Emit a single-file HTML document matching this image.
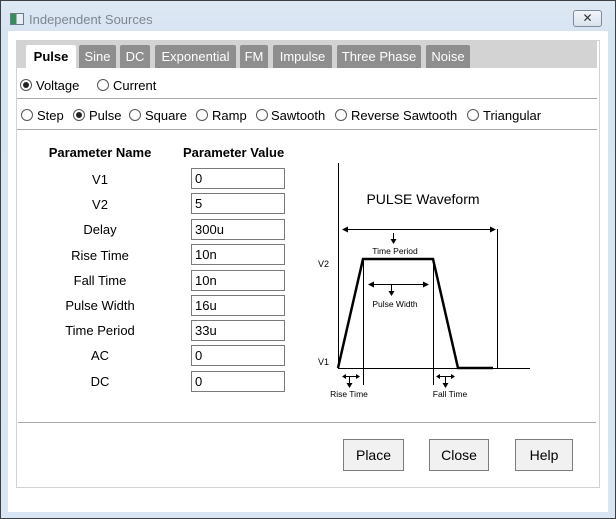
<!DOCTYPE html>
<html><head><meta charset="utf-8"><style>
*{margin:0;padding:0;box-sizing:border-box}
body{width:616px;height:519px;overflow:hidden;background:#dbe6f2;font-family:"Liberation Sans",sans-serif;font-size:13px;color:#000;position:relative}
.abs{position:absolute}
.win{left:0;top:0;width:616px;height:519px;border:1px solid #3c3f44;background:linear-gradient(#dde8f4,#d6e3f1 40px,#d9e5f2)}
.client{left:8px;top:31px;width:600px;height:481px;background:#fff}
.panel{left:16px;top:40px;width:584px;height:448px;border:1px solid #d2d2d2;background:#fff}
.tabbar{left:17px;top:41px;width:580px;height:27px;background:#d3d3d3}
.tab{position:absolute;top:45px;height:23px;background:#8e8e8e;color:#fff;font-size:13px;text-align:center;line-height:24px;border-radius:2px 2px 0 0;white-space:nowrap}
.tab.act{background:#fff;color:#000;font-weight:bold}
.hl{position:absolute;height:1px;background:#a8a8a8}
.radio{position:absolute;width:12px;height:12px;border:1px solid #555;border-radius:50%;background:#fff}
.radio.on::after{content:"";position:absolute;left:2px;top:2px;width:6px;height:6px;border-radius:50%;background:#222}
.lbl{position:absolute;font-size:13px;white-space:nowrap}
.pn{position:absolute;left:30px;width:140px;text-align:center;font-size:13px;white-space:nowrap}
.inp{position:absolute;left:191px;width:94px;height:21px;border:1px solid #7a7a7a;padding-left:3px;font-size:13px;line-height:19px}
.btn{position:absolute;top:439px;height:32px;border:1px solid #7c7c7c;background:#f1f1f1;text-align:center;line-height:30px;font-size:14px}
</style></head><body>
<div class="abs win"></div>
<div class="abs" style="left:10px;top:13px;width:14px;height:12px;border:1px solid #6a7b8c;background:linear-gradient(90deg,#3c8b5a 45%,#e8eef4 45%)"></div>
<div class="lbl" style="left:29px;top:12px;color:#7d8691;font-size:13px">Independent Sources</div>
<div class="abs" style="left:573px;top:10px;width:29px;height:17px;border:1px solid #7f8a96;border-radius:3px;background:linear-gradient(#f3f6f9,#d9e2ec);text-align:center;font-size:12px;line-height:15px;color:#333">✕</div>
<div class="abs client"></div>
<div class="abs panel"></div>
<div class="abs tabbar"></div>
<div class="tab act" style="left:26px;width:50px">Pulse</div>
<div class="tab" style="left:79px;width:37px">Sine</div>
<div class="tab" style="left:120px;width:30px">DC</div>
<div class="tab" style="left:155px;width:81px">Exponential</div>
<div class="tab" style="left:240px;width:28px">FM</div>
<div class="tab" style="left:273px;width:59px">Impulse</div>
<div class="tab" style="left:337px;width:84px">Three Phase</div>
<div class="tab" style="left:426px;width:44px">Noise</div>

<div class="radio on" style="left:20px;top:79px"></div><div class="lbl" style="left:36px;top:78px">Voltage</div>
<div class="radio" style="left:97px;top:79px"></div><div class="lbl" style="left:113px;top:78px">Current</div>
<div class="hl" style="left:17px;top:98px;width:580px"></div>

<div class="radio" style="left:21px;top:109px"></div><div class="lbl" style="left:37px;top:108px">Step</div>
<div class="radio on" style="left:73px;top:109px"></div><div class="lbl" style="left:89px;top:108px">Pulse</div>
<div class="radio" style="left:129px;top:109px"></div><div class="lbl" style="left:145px;top:108px">Square</div>
<div class="radio" style="left:196px;top:109px"></div><div class="lbl" style="left:212px;top:108px">Ramp</div>
<div class="radio" style="left:256px;top:109px"></div><div class="lbl" style="left:271px;top:108px">Sawtooth</div>
<div class="radio" style="left:335px;top:109px"></div><div class="lbl" style="left:351px;top:108px">Reverse Sawtooth</div>
<div class="radio" style="left:467px;top:109px"></div><div class="lbl" style="left:483px;top:108px">Triangular</div>
<div class="hl" style="left:17px;top:129px;width:580px"></div>

<div class="pn" style="top:145px;font-weight:bold">Parameter Name</div>
<div class="lbl" style="left:183px;top:145px;font-weight:bold">Parameter Value</div>

<div class="pn" style="top:172px">V1</div><div class="inp" style="top:168px">0</div>
<div class="pn" style="top:197px">V2</div><div class="inp" style="top:193px">5</div>
<div class="pn" style="top:222px">Delay</div><div class="inp" style="top:219px">300u</div>
<div class="pn" style="top:248px">Rise Time</div><div class="inp" style="top:244px">10n</div>
<div class="pn" style="top:273px">Fall Time</div><div class="inp" style="top:270px">10n</div>
<div class="pn" style="top:298px">Pulse Width</div><div class="inp" style="top:295px">16u</div>
<div class="pn" style="top:323px">Time Period</div><div class="inp" style="top:320px">33u</div>
<div class="pn" style="top:348px">AC</div><div class="inp" style="top:345px">0</div>
<div class="pn" style="top:374px">DC</div><div class="inp" style="top:371px">0</div>

<svg class="abs" style="left:0;top:0" width="616" height="519" font-family="Liberation Sans,sans-serif">
<g stroke="#000" fill="none" stroke-width="1">
<line x1="338.5" y1="163" x2="338.5" y2="368"/>
<line x1="338" y1="368.5" x2="530" y2="368.5"/>
<line x1="363.5" y1="259" x2="363.5" y2="385"/>
<line x1="433.5" y1="259" x2="433.5" y2="385"/>
<line x1="497.5" y1="229" x2="497.5" y2="368"/>
<line x1="343" y1="229.5" x2="495" y2="229.5"/>
<line x1="393.5" y1="233" x2="393.5" y2="241"/>
<line x1="369" y1="284.5" x2="428" y2="284.5"/>
<line x1="391.5" y1="285" x2="391.5" y2="293"/>
<line x1="343" y1="376.5" x2="359" y2="376.5"/>
<line x1="349.5" y1="377" x2="349.5" y2="385"/>
<line x1="437" y1="376.5" x2="454" y2="376.5"/>
<line x1="445.5" y1="377" x2="445.5" y2="385"/>
</g>
<polyline points="338,368 363,259 433,259 458,368 493,368" stroke="#000" stroke-width="2.5" fill="none"/>
<g fill="#000">
<path d="M342,229.5 l6,-3 v6z"/><path d="M496,229.5 l-6,-3 v6z"/>
<path d="M393.5,244 l-3,-5 h6z"/>
<path d="M368,284.5 l6,-3 v6z"/><path d="M429,284.5 l-6,-3 v6z"/>
<path d="M391.5,296 l-3,-5 h6z"/>
<path d="M342,376.5 l4,-2.5 v5z"/><path d="M360,376.5 l-4,-2.5 v5z"/>
<path d="M349.5,388 l-3,-5 h6z"/>
<path d="M436,376.5 l4,-2.5 v5z"/><path d="M455,376.5 l-4,-2.5 v5z"/>
<path d="M445.5,388 l-3,-5 h6z"/>
</g>
<text x="423" y="204" font-size="14" text-anchor="middle">PULSE Waveform</text>
<text x="395" y="254" font-size="8.5" text-anchor="middle">Time Period</text>
<text x="395" y="307" font-size="8.5" text-anchor="middle">Pulse Width</text>
<text x="318" y="267" font-size="9">V2</text>
<text x="318" y="365" font-size="9">V1</text>
<text x="349" y="397" font-size="8.5" text-anchor="middle">Rise Time</text>
<text x="450" y="397" font-size="8.5" text-anchor="middle">Fall Time</text>
</svg>

<div class="hl" style="left:18px;top:422px;width:578px"></div>
<div class="btn" style="left:343px;width:61px">Place</div>
<div class="btn" style="left:429px;width:60px">Close</div>
<div class="btn" style="left:515px;width:58px">Help</div>
</body></html>
